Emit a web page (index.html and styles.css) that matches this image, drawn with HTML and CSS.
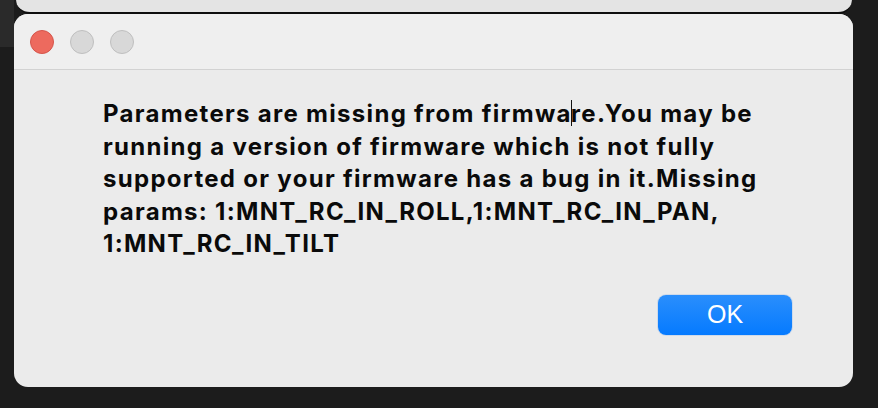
FILE: index.html
```html
<!DOCTYPE html>
<html>
<head>
<meta charset="utf-8">
<link rel="stylesheet" href="styles.css">
</head>
<body>
<div class="screen">
  <div class="backwin"></div>
  <div class="dialog">
    <div class="titlebar">
      <span class="light red"></span>
      <span class="light gray"></span>
      <span class="light gray"></span>
    </div>
    <div class="body">
      <p class="message">Parameters are missing from firmwa<span class="caret"></span>re.You may be running a version of firmware which is not fully supported or your firmware has a bug in it.Missing params: 1:MNT_RC_IN_ROLL,1:MNT_RC_IN_PAN, 1:MNT_RC_IN_TILT</p>
      <div class="actions">
        <button class="ok">OK</button>
      </div>
    </div>
  </div>
</div>
</body>
</html>
```
FILE: styles.css
```css
html, body {
  margin: 0;
  padding: 0;
}
body {
  width: 878px;
  height: 408px;
  overflow: hidden;
  background: linear-gradient(#2a2a2a, #2a2a2a) no-repeat 0 0 / 14px 47px, #1c1c1c;
}
.screen {
  display: flex;
  flex-direction: column;
  width: 878px;
  height: 408px;
}
.backwin {
  height: 12px;
  margin: 0 26px 0 16px;
  background: #e4e4e4;
  border-radius: 0 0 14px 14px;
  border-bottom: 2px solid #0e0e0e;
}
.dialog {
  margin: 0 25px 0 14px;
  height: 373px;
  background: #ebebeb;
  border-radius: 14px;
  display: flex;
  flex-direction: column;
  overflow: hidden;
}
.titlebar {
  height: 56px;
  background: #efefef;
  border-bottom: 1px solid #d2d2d2;
  display: flex;
  align-items: center;
  gap: 16px;
  padding-left: 16px;
  box-sizing: border-box;
}
.light {
  width: 24px;
  height: 24px;
  border-radius: 50%;
  box-sizing: border-box;
}
.red {
  background: #ed6a5e;
  border: 1px solid #d5554b;
}
.gray {
  background: #d8d8d8;
  border: 1px solid #bfbfbf;
}
.body {
  flex: 1;
  display: flex;
  flex-direction: column;
  padding: 28px 30px 0 89px;
}
.message {
  margin: 0;
  font-family: Inter, "Noto Sans", sans-serif;
  font-weight: 700;
  font-size: 24px;
  line-height: 32.5px;
  color: #0a0a0a;
  letter-spacing: 1.3px;
}
.caret {
  display: inline-block;
  width: 1px;
  height: 26px;
  background: #111;
  vertical-align: -4px;
  margin: 0 -1px 0 -1px;
}
.actions {
  display: flex;
  justify-content: flex-end;
  margin: 34px 31px 0 0;
}
.ok {
  width: 134px;
  height: 40px;
  border: 0;
  border-radius: 8px;
  background: linear-gradient(#2a8efc, #057aff);
  color: #fff;
  font-family: "Liberation Sans", Arial, sans-serif;
  font-size: 25px;
  box-shadow: 0 0 0 1px rgba(40, 120, 230, 0.15);
  padding: 0;
}
```
